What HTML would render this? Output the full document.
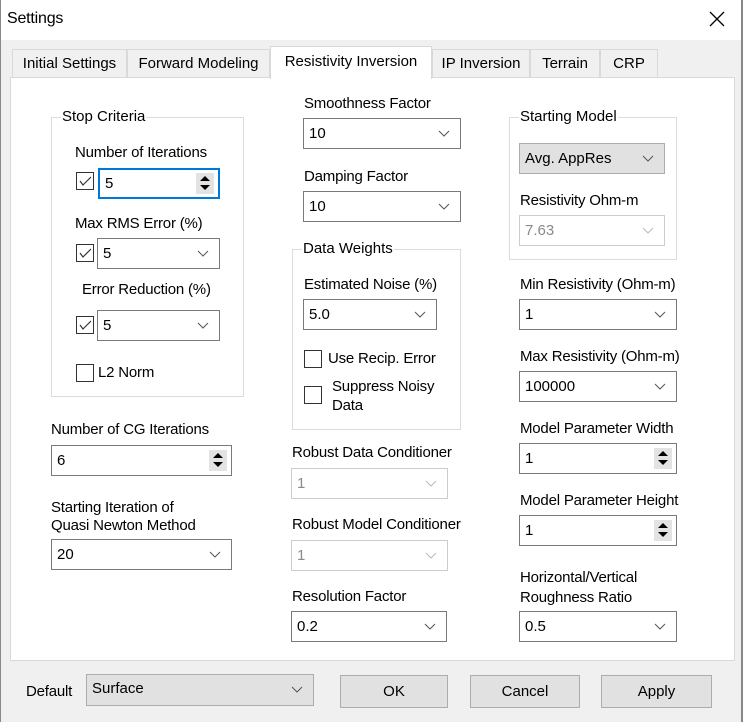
<!DOCTYPE html>
<html><head><meta charset="utf-8"><style>
*{box-sizing:border-box;margin:0;padding:0}
body{width:743px;height:722px;overflow:hidden;background:#f0f0f0;font-family:"Liberation Sans",Arial,sans-serif;font-size:15px;color:#000;position:relative}
.a{position:absolute}
.lbl{position:absolute;white-space:nowrap;line-height:18px;letter-spacing:-0.2px}
.box{position:absolute;background:#fff;border:1px solid #7a7a7a;height:31px;line-height:29px;padding-left:5px}
.box.dis{border-color:#ccc;color:#8a8a8a}
.box.gray{background:#e1e1e1;border-color:#adadad}
.chev{position:absolute;right:10px;top:11px;width:12px;height:8px}
.spin{position:absolute;right:4px;top:4px;width:18px;height:21px;background:#e3e3e3}
.spin:before{content:"";position:absolute;left:4px;top:3px;border-left:5px solid transparent;border-right:5px solid transparent;border-bottom:5px solid #000}
.spin:after{content:"";position:absolute;left:4px;top:12px;border-left:5px solid transparent;border-right:5px solid transparent;border-top:5px solid #000}
.cb{position:absolute;width:18px;height:18px;border:1px solid #333;background:#fff}
.grp{position:absolute;border:1px solid #dcdcdc}
.gl{position:absolute;background:#fff;padding:0 1px;line-height:18px;white-space:nowrap}
.tab{position:absolute;top:49px;height:29px;background:#f0f0f0;border:1px solid #d9d9d9;border-bottom:none;line-height:28px;text-align:center}
.btn{position:absolute;background:#e1e1e1;border:1px solid #adadad;height:33px;line-height:31px;text-align:center}
</style></head><body>
<div class="a" style="left:0;top:0;width:743px;height:40px;background:#fff"></div>
<div class="a" style="left:0;top:0;width:1px;height:722px;background:#888"></div>
<div class="a" style="left:741px;top:0;width:2px;height:722px;background:#888"></div>
<div class="lbl" style="left:7px;top:10px;font-size:16px">Settings</div>
<svg class="a" style="left:709px;top:11px" width="16" height="16"><path d="M1 1L15 15M15 1L1 15" stroke="#000" stroke-width="1.3"/></svg>

<div class="tab" style="left:12px;width:115px">Initial Settings</div>
<div class="tab" style="left:127px;width:143px">Forward Modeling</div>
<div class="tab" style="left:432px;width:98px">IP Inversion</div>
<div class="tab" style="left:530px;width:70px">Terrain</div>
<div class="tab" style="left:600px;width:58px">CRP</div>
<div class="a" style="left:10px;top:77px;width:725px;height:584px;background:#fff;border:1px solid #d9d9d9"></div>
<div class="tab" style="left:270px;top:46px;width:162px;height:33px;background:#fff;line-height:30px">Resistivity Inversion</div>

<!-- Stop criteria -->
<div class="grp" style="left:51px;top:117px;width:193px;height:280px"></div>
<div class="gl" style="left:61px;top:108px">Stop Criteria</div>
<div class="lbl" style="left:75px;top:144px">Number of Iterations</div>
<div class="cb" style="left:76px;top:172px"><svg width="16" height="16"><path d="M3 8l3 4 8-8" stroke="#333" fill="none" stroke-width="1.2"/></svg></div>
<div class="box" style="left:98px;top:168px;width:122px;border:2px solid #0078d7;line-height:27px">5<div class="spin" style="top:3px"></div></div>
<div class="lbl" style="left:75px;top:215px">Max RMS Error (%)</div>
<div class="cb" style="left:76px;top:244px"><svg width="16" height="16"><path d="M3 8l3 4 8-8" stroke="#333" fill="none" stroke-width="1.2"/></svg></div>
<div class="box" style="left:97px;top:238px;width:123px">5<svg class="chev" viewBox="0 0 12 8"><path d="M1 1l5 5 5-5" stroke="#555" fill="none"/></svg></div>
<div class="lbl" style="left:82px;top:281px">Error Reduction (%)</div>
<div class="cb" style="left:76px;top:316px"><svg width="16" height="16"><path d="M3 8l3 4 8-8" stroke="#333" fill="none" stroke-width="1.2"/></svg></div>
<div class="box" style="left:97px;top:310px;width:123px">5<svg class="chev" viewBox="0 0 12 8"><path d="M1 1l5 5 5-5" stroke="#555" fill="none"/></svg></div>
<div class="cb" style="left:76px;top:364px"></div>
<div class="lbl" style="left:98px;top:364px">L2 Norm</div>

<div class="lbl" style="left:51px;top:421px">Number of CG Iterations</div>
<div class="box" style="left:51px;top:445px;width:181px">6<div class="spin"></div></div>
<div class="lbl" style="left:51px;top:499px">Starting Iteration of</div>
<div class="lbl" style="left:51px;top:517px">Quasi Newton Method</div>
<div class="box" style="left:51px;top:539px;width:181px">20<svg class="chev" viewBox="0 0 12 8"><path d="M1 1l5 5 5-5" stroke="#555" fill="none"/></svg></div>

<!-- Middle -->
<div class="lbl" style="left:304px;top:95px">Smoothness Factor</div>
<div class="box" style="left:303px;top:118px;width:158px">10<svg class="chev" viewBox="0 0 12 8"><path d="M1 1l5 5 5-5" stroke="#555" fill="none"/></svg></div>
<div class="lbl" style="left:304px;top:168px">Damping Factor</div>
<div class="box" style="left:303px;top:191px;width:158px">10<svg class="chev" viewBox="0 0 12 8"><path d="M1 1l5 5 5-5" stroke="#555" fill="none"/></svg></div>
<div class="grp" style="left:292px;top:249px;width:169px;height:181px"></div>
<div class="gl" style="left:302px;top:240px">Data Weights</div>
<div class="lbl" style="left:304px;top:276px">Estimated Noise (%)</div>
<div class="box" style="left:303px;top:299px;width:134px">5.0<svg class="chev" viewBox="0 0 12 8"><path d="M1 1l5 5 5-5" stroke="#555" fill="none"/></svg></div>
<div class="cb" style="left:304px;top:350px"></div>
<div class="lbl" style="left:328px;top:350px">Use Recip. Error</div>
<div class="cb" style="left:304px;top:386px"></div>
<div class="lbl" style="left:332px;top:378px">Suppress Noisy</div>
<div class="lbl" style="left:332px;top:397px">Data</div>
<div class="lbl" style="left:292px;top:444px">Robust Data Conditioner</div>
<div class="box dis" style="left:291px;top:468px;width:157px">1<svg class="chev" viewBox="0 0 12 8"><path d="M1 1l5 5 5-5" stroke="#bbb" fill="none"/></svg></div>
<div class="lbl" style="left:292px;top:516px">Robust Model Conditioner</div>
<div class="box dis" style="left:291px;top:540px;width:157px">1<svg class="chev" viewBox="0 0 12 8"><path d="M1 1l5 5 5-5" stroke="#bbb" fill="none"/></svg></div>
<div class="lbl" style="left:292px;top:588px">Resolution Factor</div>
<div class="box" style="left:291px;top:611px;width:156px">0.2<svg class="chev" viewBox="0 0 12 8"><path d="M1 1l5 5 5-5" stroke="#555" fill="none"/></svg></div>

<!-- Right -->
<div class="grp" style="left:509px;top:117px;width:168px;height:143px"></div>
<div class="gl" style="left:519px;top:108px">Starting Model</div>
<div class="box gray" style="left:519px;top:143px;width:146px">Avg. AppRes<svg class="chev" viewBox="0 0 12 8"><path d="M1 1l5 5 5-5" stroke="#555" fill="none"/></svg></div>
<div class="lbl" style="left:520px;top:192px">Resistivity Ohm-m</div>
<div class="box dis" style="left:519px;top:215px;width:146px">7.63<svg class="chev" viewBox="0 0 12 8"><path d="M1 1l5 5 5-5" stroke="#bbb" fill="none"/></svg></div>
<div class="lbl" style="left:520px;top:276px">Min Resistivity (Ohm-m)</div>
<div class="box" style="left:519px;top:299px;width:158px">1<svg class="chev" viewBox="0 0 12 8"><path d="M1 1l5 5 5-5" stroke="#555" fill="none"/></svg></div>
<div class="lbl" style="left:520px;top:348px">Max Resistivity (Ohm-m)</div>
<div class="box" style="left:519px;top:371px;width:158px">100000<svg class="chev" viewBox="0 0 12 8"><path d="M1 1l5 5 5-5" stroke="#555" fill="none"/></svg></div>
<div class="lbl" style="left:520px;top:420px">Model Parameter Width</div>
<div class="box" style="left:519px;top:443px;width:158px">1<div class="spin"></div></div>
<div class="lbl" style="left:520px;top:492px">Model Parameter Height</div>
<div class="box" style="left:519px;top:515px;width:158px">1<div class="spin"></div></div>
<div class="lbl" style="left:520px;top:569px">Horizontal/Vertical</div>
<div class="lbl" style="left:520px;top:589px">Roughness Ratio</div>
<div class="box" style="left:519px;top:611px;width:158px">0.5<svg class="chev" viewBox="0 0 12 8"><path d="M1 1l5 5 5-5" stroke="#555" fill="none"/></svg></div>

<!-- Bottom -->
<div class="lbl" style="left:26px;top:683px">Default</div>
<div class="box gray" style="left:86px;top:674px;width:228px;height:32px;line-height:28px">Surface<svg class="chev" viewBox="0 0 12 8"><path d="M1 1l5 5 5-5" stroke="#555" fill="none"/></svg></div>
<div class="btn" style="left:340px;top:675px;width:108px">OK</div>
<div class="btn" style="left:470px;top:675px;width:110px">Cancel</div>
<div class="btn" style="left:601px;top:675px;width:111px">Apply</div>
</body></html>
